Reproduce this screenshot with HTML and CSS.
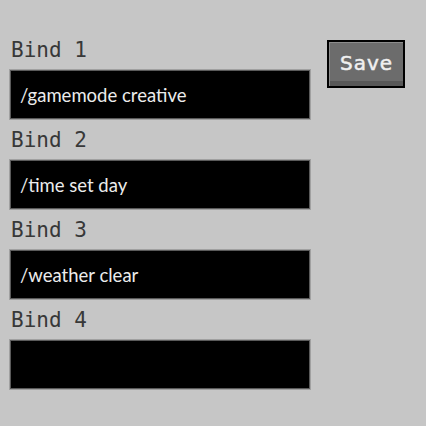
FILE: index.html
```html
<!DOCTYPE html>
<html lang="en">
<head>
    <meta charset="UTF-8">
    <meta name="viewport" content="width=device-width, initial-scale=1.0">
    <title>Command Binds</title>
    <link rel="stylesheet" href="styles.css">
</head>
<body>
    <div class="screen">
        <div class="binds">
            <div class="bind">
                <label class="bind-label" for="bind1">Bind 1</label>
                <input class="bind-input" id="bind1" type="text" value="/gamemode creative">
            </div>
            <div class="bind">
                <label class="bind-label" for="bind2">Bind 2</label>
                <input class="bind-input" id="bind2" type="text" value="/time set day">
            </div>
            <div class="bind">
                <label class="bind-label" for="bind3">Bind 3</label>
                <input class="bind-input" id="bind3" type="text" value="/weather clear">
            </div>
            <div class="bind">
                <label class="bind-label" for="bind4">Bind 4</label>
                <input class="bind-input" id="bind4" type="text" value="">
            </div>
        </div>
        <button class="save-btn">Save</button>
    </div>
</body>
</html>
```

FILE: styles.css
```css
html, body {
    margin: 0;
    height: 100%;
    background-color: #c6c6c6;
}
.screen {
    display: flex;
    align-items: flex-start;
    gap: 17px;
    padding: 38px 0 0 10px;
}
.binds {
    display: flex;
    flex-direction: column;
    width: 300px;
}
.bind {
    display: flex;
    flex-direction: column;
    gap: 8px;
    padding-bottom: 9px;
}
.bind-label {
    font-family: "DejaVu Sans Mono", monospace;
    font-size: 21px;
    line-height: 24px;
    color: #383838;
    padding-left: 1px;
}
.bind-input {
    box-sizing: border-box;
    width: 300px;
    height: 49px;
    margin: 0;
    padding: 0 8px 0 9px;
    background-color: #000;
    color: #ececec;
    border: 1px solid #5a5a5a;
    box-shadow: 0 0 0 1px #a0a0a0;
    font-family: Lato, "Open Sans", sans-serif;
    font-size: 18.5px;
    outline: none;
}
.save-btn {
    box-sizing: border-box;
    width: 78px;
    height: 48px;
    margin-top: 2px;
    padding: 0 0 2px 1px;
    background-color: #6c6c6c;
    border: 2px solid #000;
    box-shadow: inset 1px 1px 0 #8c8c8c, inset 0 -5px 0 #585858;
    color: #f0f0f0;
    font-family: "DejaVu Sans", sans-serif;
    font-size: 20px;
    letter-spacing: 1px;
    -webkit-text-stroke: 0.5px #f0f0f0;
    cursor: pointer;
}
```
